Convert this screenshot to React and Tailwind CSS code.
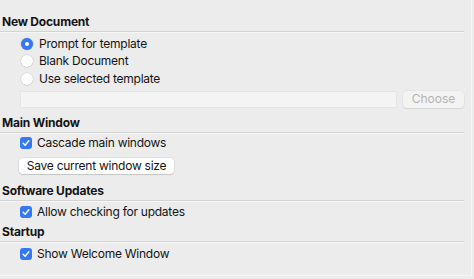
const Radio = ({ checked, label }) => (
  <div className="flex h-[17.5px] items-center">
    {checked ? (
      <span className="flex h-[12px] w-[12px] items-center justify-center rounded-full bg-[#3478f6] shadow-[0_0_0_0.5px_rgba(0,0,0,0.15)]">
        <span className="h-[4.5px] w-[4.5px] rounded-full bg-white" />
      </span>
    ) : (
      <span className="h-[12px] w-[12px] rounded-full bg-white shadow-[0_0_0_0.5px_rgba(0,0,0,0.12),0_0.5px_1px_rgba(0,0,0,0.12)]" />
    )}
    <span className="ml-[6px]">{label}</span>
  </div>
);

const Check = ({ label }) => (
  <div className="flex h-[17px] items-center">
    <span className="flex h-[12px] w-[12px] items-center justify-center rounded-[3px] bg-[#3478f6]">
      <svg viewBox="0 0 12 12" className="h-[10px] w-[10px]" fill="none">
        <path d="M2.6 6.3 L5 8.6 L9.4 3.4" stroke="white" strokeWidth="1.8" strokeLinecap="round" strokeLinejoin="round" />
      </svg>
    </span>
    <span className="ml-[5px]">{label}</span>
  </div>
);

const Header = ({ children, className = "" }) => (
  <div className={`w-[464px] border-b border-[#d3d3d3] pb-[1px] pl-[2px] font-bold leading-4 tracking-[-0.2px] shadow-[0_1px_0_#f7f7f7] ${className}`}>
    {children}
  </div>
);

export default function App() {
  return (
    <div
      className="h-[279px] w-[474px] overflow-hidden bg-[#ececec] text-[12px] tracking-[-0.25px] text-[#141414]"
      style={{ fontFamily: "Inter, 'Noto Sans', sans-serif" }}
    >
      <div className="h-[276px] w-[472px] border-b border-r border-[#f6f6f6] pt-[14px]">
        <Header>New Document</Header>
        <div className="pl-[21px] pt-[3px]">
          <Radio checked label="Prompt for template" />
          <Radio label="Blank Document" />
          <Radio label="Use selected template" />
          <div className="mt-[3px] flex w-[443px] items-center gap-[7px]">
            <div className="h-[15px] flex-1 bg-[#f4f4f4] shadow-[0_0_0_0.5px_rgba(0,0,0,0.06)]" />
            <div className="flex h-[17px] w-[61px] items-center justify-center rounded-[4px] bg-[#f3f3f3] tracking-normal text-[#b3b3b3] shadow-[0_0_0_0.5px_rgba(0,0,0,0.06),0_1px_1px_rgba(0,0,0,0.08)]">
              Choose
            </div>
          </div>
        </div>

        <Header className="mt-[7px]">Main Window</Header>
        <div className="pl-[20px] pt-[2px]">
          <Check label="Cascade main windows" />
          <div className="ml-[-1px] mt-[6px] flex h-[16px] w-[155px] items-center justify-center rounded-[4px] bg-white shadow-[0_0_0_0.5px_rgba(0,0,0,0.1),0_1px_1px_rgba(0,0,0,0.12)]">
            Save current window size
          </div>
        </div>

        <Header className="mt-[9px]">Software Updates</Header>
        <div className="pl-[20px] pt-[3px]">
          <Check label="Allow checking for updates" />
        </div>

        <Header className="mt-[3px]">Startup</Header>
        <div className="pl-[20px] pt-[4px]">
          <Check label="Show Welcome Window" />
        </div>
      </div>
    </div>
  );
}
